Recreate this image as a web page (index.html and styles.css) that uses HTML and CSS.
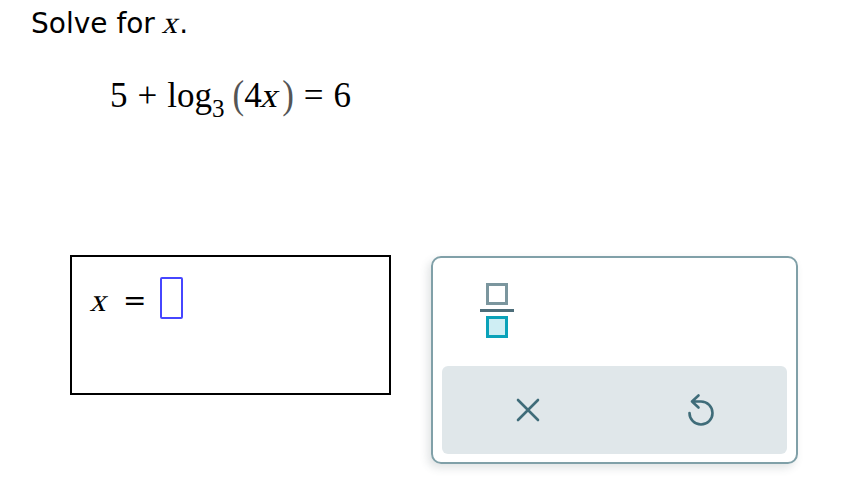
FILE: index.html
```html
<!DOCTYPE html>
<html>
<head>
<meta charset="utf-8">
<link rel="stylesheet" href="styles.css">
</head>
<body>
<div class="page">
  <div class="title">Solve for <i class="mi">x</i>.</div>
  <div class="equation">
    <span class="mn">5</span><span class="mo">+</span><span class="fn">log</span><sub class="sub">3</sub><span class="paren">(</span><span class="mn">4</span><i class="mi">x</i><span class="paren">)</span><span class="mo">=</span><span class="mn">6</span>
  </div>
  <div class="work">
    <div class="answer">
      <div class="answer-row">
        <i class="mi ans-x">x</i>
        <span class="ans-eq">=</span>
        <span class="slot"></span>
      </div>
    </div>
    <div class="keypad">
      <div class="keys">
        <button class="key-frac" type="button" aria-label="fraction">
          <span class="frac-num"></span>
          <span class="frac-bar"></span>
          <span class="frac-den"></span>
        </button>
      </div>
      <div class="actions">
        <button class="action" type="button" aria-label="clear">
          <svg width="24" height="24" viewBox="0 0 24 24"><path d="M2 2 L22 22 M22 2 L2 22" fill="none" stroke="#3f6c79" stroke-width="2.6" stroke-linecap="round"/></svg>
        </button>
        <button class="action" type="button" aria-label="undo">
          <svg class="undo" width="30" height="34" viewBox="0 0 30 34"><path d="M12.5 2.5 L6 8.5 L12.5 14.5 M6 8.5 H15 A11.5 11.5 0 1 1 3.5 20" fill="none" stroke="#3f6c79" stroke-width="2.6" stroke-linecap="round" stroke-linejoin="round"/></svg>
        </button>
      </div>
    </div>
  </div>
</div>
</body>
</html>
```
FILE: styles.css
```css
html, body {
  margin: 0;
  padding: 0;
  background: #ffffff;
}
.page {
  width: 851px;
  height: 493px;
  overflow: hidden;
  position: relative;
}
.title {
  font-family: "DejaVu Sans", Verdana, sans-serif;
  font-size: 28px;
  line-height: 32px;
  color: #000;
  padding-left: 31px;
  padding-top: 7px;
}
.mi {
  display: inline-block;
  font-family: "Liberation Serif", "DejaVu Serif", serif;
  font-style: normal;
  transform: skewX(-14deg);
}
.title .mi {
  font-size: 31px;
}
.equation {
  font-family: "Liberation Serif", "Times New Roman", serif;
  font-size: 35px;
  line-height: 40px;
  color: #000;
  padding-left: 110px;
  margin-top: 36px;
  white-space: nowrap;
}
.equation .mi {
  margin-right: 3px;
}
.equation .mo {
  margin: 0 10px;
}
.equation .sub {
  font-size: 25px;
  vertical-align: -10px;
  line-height: 0;
  margin-right: 8px;
}
.equation .paren {
  display: inline-block;
  color: #555;
  transform: scaleY(1.12);
}
.work {
  display: flex;
  align-items: flex-start;
  gap: 40px;
  padding-left: 70px;
  margin-top: 139px;
}
.answer {
  box-sizing: border-box;
  width: 321px;
  height: 140px;
  border: 2px solid #000;
  padding: 20px 0 0 20px;
}
.answer-row {
  display: flex;
  align-items: center;
  height: 42px;
  font-family: "Liberation Serif", "Times New Roman", serif;
  font-size: 32px;
}
.ans-x {
  margin-top: 4px;
}
.ans-eq {
  margin-left: 15px;
  margin-top: 4px;
  font-family: "DejaVu Sans", sans-serif;
  font-size: 28px;
}
.slot {
  box-sizing: border-box;
  width: 23px;
  height: 42px;
  border: 2.5px solid #4646ff;
  border-radius: 2px;
  margin-left: 14px;
}
.keypad {
  box-sizing: border-box;
  width: 367px;
  height: 208px;
  margin-top: 1px;
  border: 2px solid #80a0a8;
  border-radius: 10px;
  box-shadow: -3px 4px 8px rgba(60, 80, 90, 0.16);
  padding: 0 9px 8px 9px;
  display: flex;
  flex-direction: column;
}
.keys {
  flex: 1;
  display: flex;
  padding-left: 38px;
  padding-top: 25px;
}
.key-frac {
  display: flex;
  flex-direction: column;
  align-items: center;
  width: 34px;
  padding: 0;
  margin: 0;
  border: 0;
  background: transparent;
  height: 56px;
}
.frac-num {
  box-sizing: border-box;
  width: 22px;
  height: 22px;
  border: 3px solid #7b969e;
  background: #fff;
}
.frac-bar {
  width: 34px;
  height: 3px;
  background: #4e6e7a;
  margin: 4px 0 4px;
}
.frac-den {
  box-sizing: border-box;
  width: 22px;
  height: 22px;
  border: 3px solid #0aa2b9;
  background: #cfeef4;
}
.actions {
  height: 88px;
  background: #e0e7ea;
  border-radius: 6px;
  display: grid;
  grid-template-columns: 1fr 1fr;
}
.action {
  border: 0;
  background: transparent;
  display: flex;
  align-items: center;
  justify-content: center;
  padding: 0;
  margin: 0;
}
.action svg {
  display: block;
}
```
